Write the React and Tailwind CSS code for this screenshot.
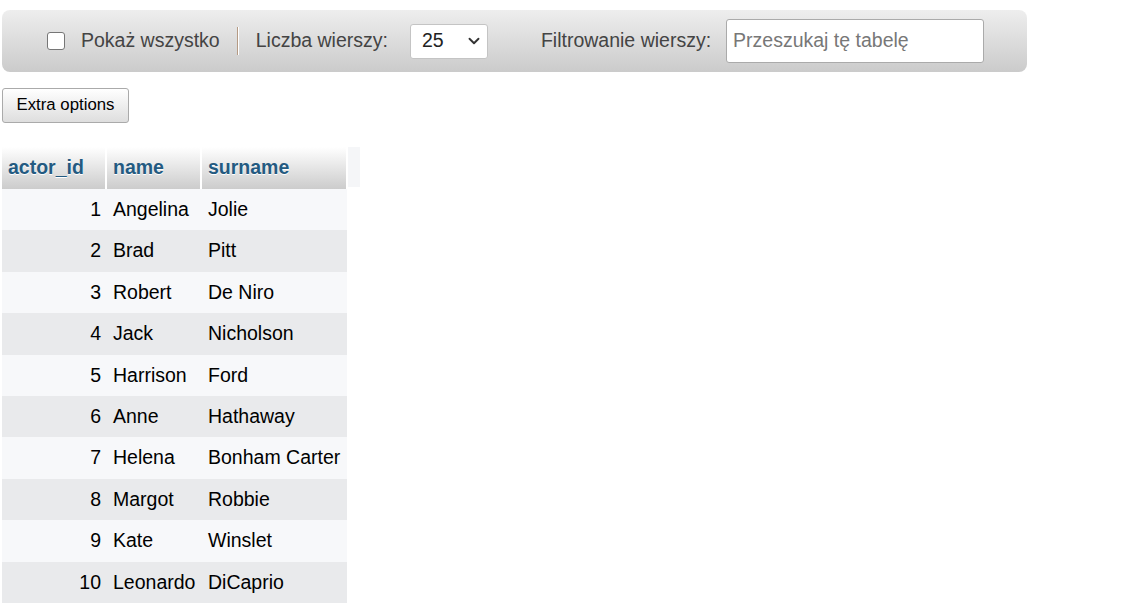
import { ChevronDown } from "lucide-react";

const rows = [
  [1, "Angelina", "Jolie"],
  [2, "Brad", "Pitt"],
  [3, "Robert", "De Niro"],
  [4, "Jack", "Nicholson"],
  [5, "Harrison", "Ford"],
  [6, "Anne", "Hathaway"],
  [7, "Helena", "Bonham Carter"],
  [8, "Margot", "Robbie"],
  [9, "Kate", "Winslet"],
  [10, "Leonardo", "DiCaprio"],
];

export default function App() {
  return (
    <div className="min-h-[613px] bg-white font-['Liberation_Sans',Arial,sans-serif]">
      {/* navigation bar */}
      <div className="pt-[10px] pl-[2px]">
        <div className="flex h-[62px] w-[1025px] items-center rounded-lg bg-gradient-to-b from-[#eeeeee] to-[#cbcbcb] text-[19.5px] text-[#444]">
          <div className="ml-[45px] h-[18px] w-[18px] rounded-[3px] border border-[#767676] bg-white" />
          <span className="ml-[16px] -mt-[1px]">Pokaż wszystko</span>
          <div className="ml-[17px] flex h-[28px]">
            <div className="w-px bg-[#b49a84]" />
            <div className="w-px bg-white" />
          </div>
          <span className="ml-[17px]">Liczba wierszy:</span>
          <div className="ml-[22px] flex h-[35px] w-[78px] items-center justify-between rounded-[3px] border border-[#c4c4c4] bg-white pl-[11px] pr-[4px] text-[#222]">
            <span>25</span>
            <ChevronDown className="h-[18px] w-[18px] text-[#333]" strokeWidth={2.5} />
          </div>
          <span className="ml-[53px]">Filtrowanie wierszy:</span>
          <div className="ml-[15px] flex h-[44px] w-[258px] items-center rounded-[3px] border border-[#aaa] bg-white px-[6px] text-[#777]">
            Przeszukaj tę tabelę
          </div>
        </div>
      </div>

      {/* extra options */}
      <div className="pl-[2px] pt-[16px]">
        <button className="flex h-[35px] w-[127px] items-center justify-center rounded-[3px] border border-[#aaa] bg-gradient-to-b from-white to-[#dedede] pb-[2px] text-[16.8px] text-black">
          Extra options
        </button>
      </div>

      {/* table */}
      <div className="pl-[2px] pt-[24px]">
        <div className="flex">
          <div className="flex h-[42px] gap-[2px] text-[19.5px] font-bold text-[#235a81] [text-shadow:0_1px_0_#fff]">
            <div className="flex w-[103px] items-center bg-gradient-to-b from-white to-[#cccccc] pl-[6px]">actor_id</div>
            <div className="flex w-[93px] items-center bg-gradient-to-b from-white to-[#cccccc] pl-[6px]">name</div>
            <div className="flex w-[144px] items-center bg-gradient-to-b from-white to-[#cccccc] pl-[6px]">surname</div>
          </div>
          <div className="ml-[2px] h-[40px] w-[12px] bg-[#f5f6f8]" />
        </div>
        <div className="w-[345px] text-[19.5px] text-black">
          {rows.map(([id, name, surname], i) => (
            <div
              key={id}
              className={`flex h-[41.4px] items-center ${i % 2 === 0 ? "bg-[#f7f8fa]" : "bg-[#e9eaec]"}`}
            >
              <div className="w-[103px] pr-[4px] text-right">{id}</div>
              <div className="ml-[2px] w-[93px] pl-[6px] whitespace-nowrap">{name}</div>
              <div className="ml-[2px] w-[145px] pl-[6px] whitespace-nowrap">{surname}</div>
            </div>
          ))}
        </div>
      </div>
    </div>
  );
}
